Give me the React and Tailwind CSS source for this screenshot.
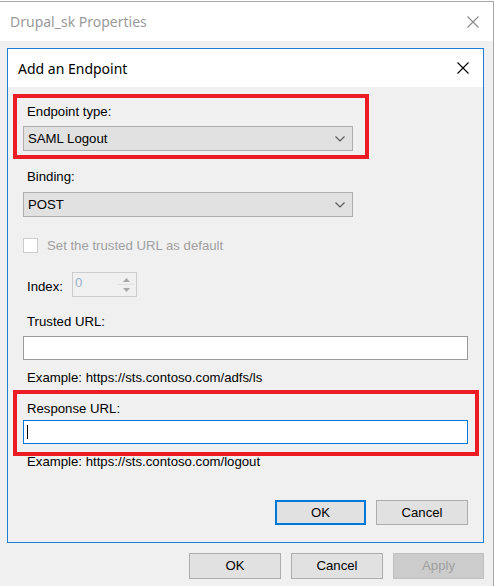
import React from 'react';

const ui = { fontFamily: '"Liberation Sans", Arial, sans-serif' };
const title = { fontFamily: '"Noto Sans", "Open Sans", sans-serif' };

function CloseIcon({ color }) {
  return (
    <svg width="12" height="12" viewBox="0 0 12 12">
      <path d="M0.5 0.5 L11.5 11.5 M11.5 0.5 L0.5 11.5" stroke={color} strokeWidth="1.1" fill="none" />
    </svg>
  );
}

function Chevron() {
  return (
    <svg width="10" height="6" viewBox="0 0 10 6">
      <path d="M0.5 0.5 L5 5 L9.5 0.5" stroke="#5a5a5a" strokeWidth="1.2" fill="none" />
    </svg>
  );
}

function Select({ value, className = '' }) {
  return (
    <div className={`w-[330px] h-[25px] flex items-center justify-between bg-[#e1e1e1] border border-[#adadad] pl-[4px] pr-[7px] text-black ${className}`}>
      <span>{value}</span>
      <Chevron />
    </div>
  );
}

function Button({ label, className = '', primary = false, disabled = false }) {
  return (
    <div
      className={`flex items-center justify-center ${
        disabled
          ? 'bg-[#cccccc] border border-[#bfbfbf] text-[#a0a0a0]'
          : primary
          ? 'bg-[#e1e1e1] border-2 border-[#0078d7] text-black'
          : 'bg-[#e1e1e1] border border-[#adadad] text-black'
      } ${className}`}
    >
      {label}
    </div>
  );
}

function Label({ children, className = '' }) {
  return <div className={`h-[15px] leading-[15px] pl-[4px] text-black ${className}`}>{children}</div>;
}

export default function App() {
  return (
    <div className="w-[494px] h-[586px] bg-white overflow-hidden text-[13.2px]" style={ui}>
      <div className="h-[1px] bg-white" />
      <div className="h-[585px] flex flex-col border-t border-r border-[#a6a6a6]">
        {/* Outer window title */}
        <div className="h-[39px] bg-white flex items-center justify-between pl-[10px] pr-[14px]">
          <span className="text-[14px] text-[#9a9a9a]" style={title}>Drupal_sk Properties</span>
          <CloseIcon color="#8a8a8a" />
        </div>

        <div className="flex-1 bg-[#f0f0f0] pt-[7px] pl-[7px] pr-[9px]">
          {/* Add an Endpoint dialog */}
          <div className="h-[495px] flex flex-col border border-[#1c7fd6]">
            <div className="h-[38px] bg-white flex items-center justify-between pl-[10px] pr-[14px]">
              <span className="text-[14px] text-black" style={title}>Add an Endpoint</span>
              <CloseIcon color="#000000" />
            </div>

            <div className="relative flex-1 flex flex-col bg-[#f0f0f0] px-[15px]">
              <Label className="mt-[17px]">Endpoint type:</Label>
              <Select value="SAML Logout" className="mt-[7px]" />

              <Label className="mt-[18px]">Binding:</Label>
              <Select value="POST" className="mt-[8px]" />

              <div className="mt-[21px] h-[15px] flex items-center gap-[9px]">
                <div className="w-[15px] h-[15px] bg-white border border-[#cccccc]" />
                <span className="text-[#a0a0a0]">Set the trusted URL as default</span>
              </div>

              <div className="mt-[19px] h-[25px] flex items-center">
                <span className="pl-[4px] pt-[4px] w-[49px]">Index:</span>
                <div className="w-[65px] h-[25px] flex border border-[#cccccc] bg-[#f0f0f0]">
                  <span className="flex-1 pl-[2px] text-[#9bb0c8] leading-[20px]">0</span>
                  <div className="w-[18px] flex flex-col py-[2px] pr-[2px]">
                    <div className="flex-1 flex items-center justify-center border-b border-[#e0e0e0]">
                      <svg width="7" height="4" viewBox="0 0 7 4"><path d="M0 4 L3.5 0 L7 4 Z" fill="#a8a8a8" /></svg>
                    </div>
                    <div className="flex-1 flex items-center justify-center">
                      <svg width="7" height="4" viewBox="0 0 7 4"><path d="M0 0 L3.5 4 L7 0 Z" fill="#a8a8a8" /></svg>
                    </div>
                  </div>
                </div>
              </div>

              <Label className="mt-[17px]">Trusted URL:</Label>
              <div className="mt-[7px] h-[24px] bg-white border border-[#9a9a9a]" />
              <Label className="mt-[10px]">Example: https://sts.contoso.com/adfs/ls</Label>

              <Label className="mt-[16px]">Response URL:</Label>
              <div className="mt-[4px] h-[24px] bg-white border border-[#0078d7] flex items-center pl-[3px]">
                <div className="w-[1px] h-[14px] bg-black" />
              </div>
              <Label className="mt-[10px]">Example: https://sts.contoso.com/logout</Label>

              <div className="mt-[31px] flex justify-end gap-[10px]">
                <Button label="OK" primary className="w-[91px] h-[25px]" />
                <Button label="Cancel" className="w-[92px] h-[25px]" />
              </div>

              {/* red annotation boxes */}
              <div className="absolute left-[5px] top-[7px] w-[356px] h-[65px] border-4 border-[#ed1c24]" />
              <div className="absolute left-[5px] top-[303px] w-[466px] h-[66px] border-4 border-[#ed1c24]" />
            </div>
          </div>

          <div className="mt-[10px] flex justify-end gap-[10px]">
            <Button label="OK" className="w-[92px] h-[26px]" />
            <Button label="Cancel" className="w-[92px] h-[26px]" />
            <Button label="Apply" disabled className="w-[91px] h-[26px]" />
          </div>
        </div>
      </div>
    </div>
  );
}
